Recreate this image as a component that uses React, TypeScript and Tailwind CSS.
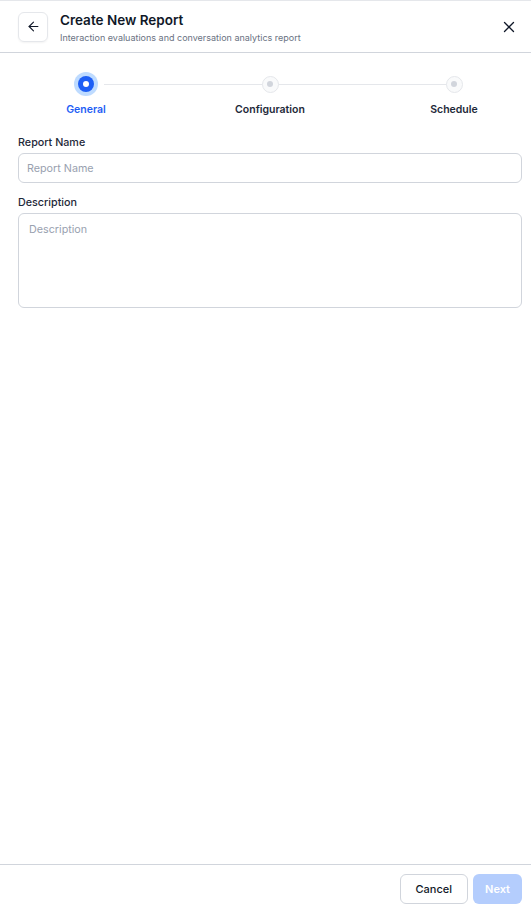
import { ArrowLeft, X } from 'lucide-react';
import clsx from 'clsx';

const steps = ['General', 'Configuration', 'Schedule'];

export default function App() {
  const current = 0;

  return (
    <div className="h-screen flex flex-col bg-white border-t border-gray-200 font-['Inter',sans-serif] text-gray-900">
      {/* Header */}
      <div className="flex items-center gap-3 px-[18px] h-[52px] border-b border-gray-300 shrink-0">
        <button className="w-[30px] h-[30px] flex items-center justify-center rounded-md border border-gray-200 shadow-xs text-gray-900">
          <ArrowLeft size={15} strokeWidth={1.75} />
        </button>
        <div className="flex-1 min-w-0 pt-[2px]">
          <div className="text-[13.5px] font-semibold leading-5 text-gray-900">Create New Report</div>
          <div className="text-[9px] leading-4 text-gray-500">
            Interaction evaluations and conversation analytics report
          </div>
        </div>
        <button className="w-6 h-6 -mr-[8px] flex items-center justify-center text-gray-900">
          <X size={18} strokeWidth={1.75} />
        </button>
      </div>

      {/* Body */}
      <div className="flex-1 overflow-y-auto pl-[18px] pr-[9px]">
        <div className="relative flex justify-between px-[18px] pt-[19px]">
          <div className="absolute left-[86px] right-[68px] top-[31px] h-px bg-gray-200" />
          {steps.map((s, i) => (
            <div key={s} className="relative w-[100px] flex flex-col items-center">
              {i === current ? (
                <div className="w-6 h-6 rounded-full bg-blue-200 flex items-center justify-center">
                  <div className="w-4 h-4 rounded-full bg-[#1d5ef5] flex items-center justify-center">
                    <div className="w-[6px] h-[6px] rounded-full bg-white" />
                  </div>
                </div>
              ) : (
                <div className="w-6 h-6 flex items-center justify-center">
                  <div className="w-[17px] h-[17px] rounded-full border border-gray-200 bg-gray-50 flex items-center justify-center">
                    <div className="w-[6px] h-[6px] rounded-full bg-gray-300" />
                  </div>
                </div>
              )}
              <div
                className={clsx(
                  'mt-[6px] text-[10.5px] font-semibold leading-4',
                  i === current ? 'text-[#1d5ef5]' : 'text-gray-800'
                )}
              >
                {s}
              </div>
            </div>
          ))}
        </div>

        <div className="mt-[16px]">
          <label className="block text-[10.75px] font-medium text-gray-800 leading-[18px]">Report Name</label>
          <input
            placeholder="Report Name"
            className="mt-[1px] w-full h-[30px] rounded-md border border-gray-300 px-[8px] text-[10.75px] placeholder:text-gray-400 outline-none"
          />
        </div>

        <div className="mt-[11px]">
          <label className="block text-[10.75px] font-medium text-gray-800 leading-[18px]">Description</label>
          <textarea
            placeholder="Description"
            className="mt-[1px] w-full h-[95px] block rounded-md border border-gray-300 px-[10px] py-[8px] text-[10.75px] placeholder:text-gray-400 outline-none resize-none"
          />
        </div>
      </div>

      {/* Footer */}
      <div className="shrink-0 border-t border-gray-300 flex justify-end gap-[5px] pl-[18px] pr-[9px] pt-[9px] pb-[3px]">
        <button className="h-[30px] px-[15px] rounded-md border border-gray-300 bg-white text-[11px] font-medium text-gray-900">
          Cancel
        </button>
        <button className="h-[30px] px-[12px] rounded-md bg-[#b4cdfd] text-[11px] font-semibold text-white">
          Next
        </button>
      </div>
    </div>
  );
}
